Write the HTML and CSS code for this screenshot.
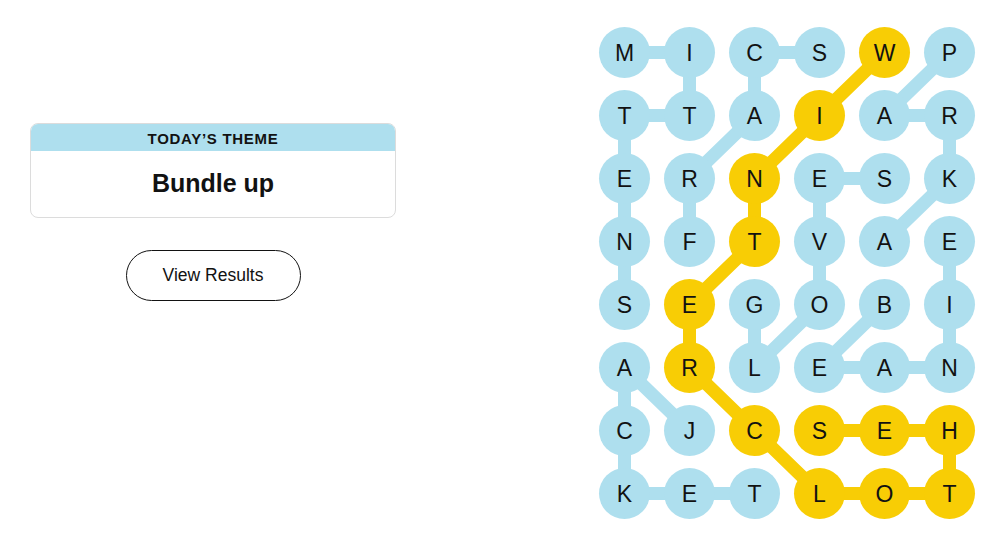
FILE: index.html
```html
<!DOCTYPE html>
<html lang="en">
<head>
<meta charset="utf-8">
<title>Strands</title>
<link rel="stylesheet" href="styles.css">
</head>
<body>
<main class="page">
  <section class="side">
    <div class="theme-card">
      <div class="theme-head">TODAY’S THEME</div>
      <div class="theme-body">Bundle up</div>
    </div>
    <button class="results-btn" type="button">View Results</button>
  </section>
  <section class="board">
    <svg class="links" width="376" height="492" viewBox="0 0 376 492" aria-hidden="true">
      <g class="link-blue">
        <polyline points="25.5,25.5 90.5,25.5 90.5,88.5 25.5,88.5 25.5,151.5 25.5,214.5 25.5,277.5"/>
        <polyline points="90.5,403.5 25.5,340.5 25.5,403.5 25.5,466.5 90.5,466.5 155.5,466.5"/>
        <polyline points="220.5,25.5 155.5,25.5 155.5,88.5 90.5,151.5 90.5,214.5"/>
        <polyline points="350.5,25.5 285.5,88.5 350.5,88.5 350.5,151.5 285.5,214.5"/>
        <polyline points="155.5,277.5 155.5,340.5 220.5,277.5 220.5,214.5 220.5,151.5 285.5,151.5"/>
        <polyline points="285.5,277.5 220.5,340.5 285.5,340.5 350.5,340.5 350.5,277.5 350.5,214.5"/>
      </g>
      <g class="link-gold">
        <polyline points="285.5,25.5 220.5,88.5 155.5,151.5 155.5,214.5 90.5,277.5 90.5,340.5 155.5,403.5 220.5,466.5 285.5,466.5 350.5,466.5 350.5,403.5 285.5,403.5 220.5,403.5"/>
      </g>
    </svg>
    <div class="grid">
      <span class="cell">M</span><span class="cell">I</span><span class="cell">C</span><span class="cell">S</span><span class="cell gold">W</span><span class="cell">P</span>
      <span class="cell">T</span><span class="cell">T</span><span class="cell">A</span><span class="cell gold">I</span><span class="cell">A</span><span class="cell">R</span>
      <span class="cell">E</span><span class="cell">R</span><span class="cell gold">N</span><span class="cell">E</span><span class="cell">S</span><span class="cell">K</span>
      <span class="cell">N</span><span class="cell">F</span><span class="cell gold">T</span><span class="cell">V</span><span class="cell">A</span><span class="cell">E</span>
      <span class="cell">S</span><span class="cell gold">E</span><span class="cell">G</span><span class="cell">O</span><span class="cell">B</span><span class="cell">I</span>
      <span class="cell">A</span><span class="cell gold">R</span><span class="cell">L</span><span class="cell">E</span><span class="cell">A</span><span class="cell">N</span>
      <span class="cell">C</span><span class="cell">J</span><span class="cell gold">C</span><span class="cell gold">S</span><span class="cell gold">E</span><span class="cell gold">H</span>
      <span class="cell">K</span><span class="cell">E</span><span class="cell">T</span><span class="cell gold">L</span><span class="cell gold">O</span><span class="cell gold">T</span>
    </div>
  </section>
</main>
</body>
</html>
```

FILE: styles.css
```css
* { box-sizing: border-box; }

html, body {
  margin: 0;
  padding: 0;
  background: #ffffff;
}

body {
  width: 1000px;
  height: 541px;
  overflow: hidden;
  font-family: "Liberation Sans", Arial, sans-serif;
  color: #121212;
}

.page {
  display: flex;
  align-items: flex-start;
  width: 1000px;
}

.side {
  width: 366px;
  margin-left: 30px;
  margin-top: 123px;
  display: flex;
  flex-direction: column;
  align-items: center;
}

.theme-card {
  width: 100%;
  border: 1px solid #dcdcdc;
  border-radius: 8px;
  overflow: hidden;
}

.theme-head {
  height: 27px;
  background: #aedfee;
  display: flex;
  align-items: center;
  justify-content: center;
  font-size: 15px;
  font-weight: 700;
  letter-spacing: 0.7px;
  padding-top: 1px;
}

.theme-body {
  height: 66px;
  display: flex;
  align-items: center;
  justify-content: center;
  font-size: 25px;
  font-weight: 700;
  padding-bottom: 2px;
}

.results-btn {
  margin-top: 32px;
  width: 175px;
  height: 51px;
  border: 1px solid #121212;
  border-radius: 26px;
  background: #ffffff;
  font-family: "Liberation Sans", Arial, sans-serif;
  font-size: 17.5px;
  color: #121212;
  padding: 0;
}

.board {
  position: relative;
  margin-left: auto;
  margin-right: 25px;
  margin-top: 27px;
  width: 376px;
  height: 492px;
}

.links {
  position: absolute;
  left: 0;
  top: 0;
}

.links polyline {
  fill: none;
  stroke-width: 13;
  stroke-linejoin: round;
}

.link-blue polyline { stroke: #aedfee; }
.link-gold polyline { stroke: #f8cd05; }

.grid {
  position: relative;
  display: grid;
  grid-template-columns: repeat(6, 51px);
  grid-auto-rows: 51px;
  column-gap: 14px;
  row-gap: 12px;
}

.cell {
  width: 51px;
  height: 51px;
  border-radius: 50%;
  background: #aedfee;
  display: flex;
  align-items: center;
  justify-content: center;
  font-size: 23px;
  line-height: 1;
  padding-top: 1px;
}

.cell.gold { background: #f8cd05; }
```
